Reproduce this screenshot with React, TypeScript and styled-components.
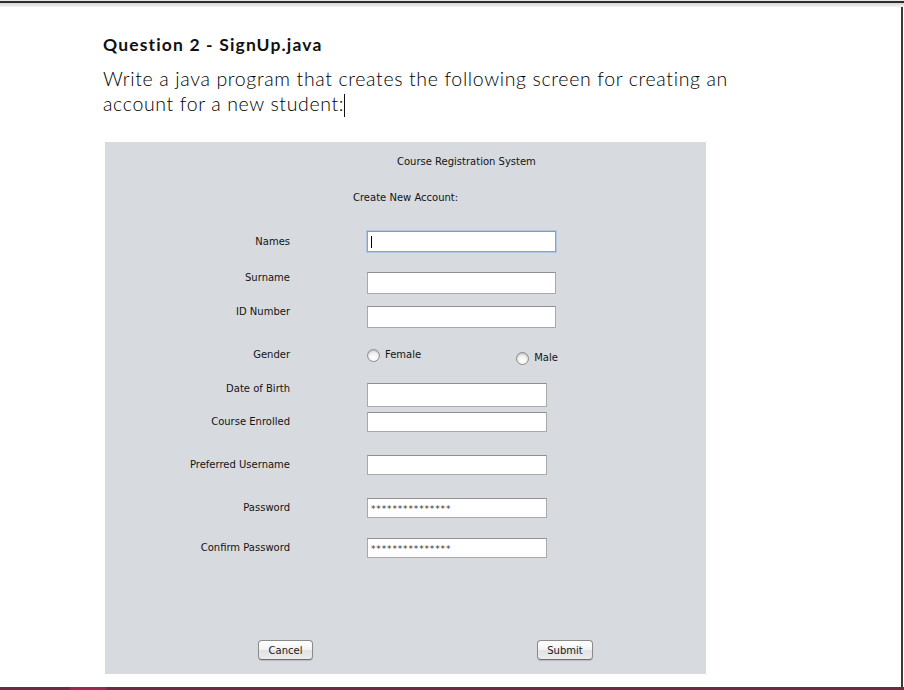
import styled, { createGlobalStyle } from 'styled-components';

const GlobalStyle = createGlobalStyle`
  html, body {
    margin: 0;
    padding: 0;
    background: #ffffff;
  }
  * {
    box-sizing: border-box;
  }
`;

const Page = styled.div`
  width: 904px;
  height: 690px;
  display: flex;
  flex-direction: column;
  background: #ffffff;
  overflow: hidden;
`;

const TopRule = styled.div`
  height: 7px;
  flex-shrink: 0;
  background: linear-gradient(
    to bottom,
    #e8e8e8 0px,
    #e8e8e8 1px,
    #2e2e2e 1px,
    #2e2e2e 3px,
    #d6d6d6 3px,
    #f4f4f4 7px
  );
`;

const Sheet = styled.div`
  flex: 1;
  border-right: 2px solid #3a3a3a;
  margin-right: 1px;
  padding: 26px 0 0 103px;
`;

const BottomBar = styled.div`
  height: 3px;
  flex-shrink: 0;
  background: #6a2b43;
  display: flex;
`;

const BarAccent = styled.div`
  width: 36px;
  margin-left: 70px;
  background: #a1264f;
`;

const Heading = styled.h2`
  margin: 0;
  font-family: 'Lato', 'Liberation Sans', sans-serif;
  font-weight: 700;
  font-size: 17.5px;
  letter-spacing: 1.15px;
  line-height: 24px;
  color: #111111;
`;

const Prompt = styled.p`
  margin: 9px 0 0 0;
  width: 690px;
  font-family: 'Lato', 'Liberation Sans', sans-serif;
  font-weight: 300;
  font-size: 19.5px;
  letter-spacing: 0.64px;
  line-height: 25px;
  color: #000000;
`;

const TextCaret = styled.span`
  display: inline-block;
  width: 0;
  height: 23px;
  border-left: 1px solid #111;
  vertical-align: -6px;
`;

const Panel = styled.div`
  width: 601px;
  height: 532px;
  margin: 25px 0 0 2px;
  background: #d7dadf;
  display: flex;
  flex-direction: column;
  font-family: 'DejaVu Sans', 'Liberation Sans', sans-serif;
  font-size: 10px;
  color: #141414;
`;

const Caption = styled.div<{ $left: number; $top: number }>`
  margin: ${(p) => p.$top}px 0 0 ${(p) => p.$left}px;
  line-height: 14px;
`;

const Row = styled.div<{ $top: number; $h?: number }>`
  display: grid;
  grid-template-columns: 185px auto;
  column-gap: 77px;
  align-items: center;
  height: ${(p) => p.$h ?? 20}px;
  margin-top: ${(p) => p.$top}px;
`;

const Label = styled.div<{ $lift?: number }>`
  text-align: right;
  line-height: 12px;
  margin-bottom: ${(p) => (p.$lift ?? 0) * 2}px;
`;

const Field = styled.div<{ $w: number; $focus?: boolean }>`
  width: ${(p) => p.$w}px;
  height: 100%;
  background: #ffffff;
  border: 1px solid ${(p) => (p.$focus ? '#86a3c8' : '#a9a9a9')};
  border-top-color: ${(p) => (p.$focus ? '#7d9cc4' : '#8f8f8f')};
  box-shadow: ${(p) => (p.$focus ? '0 0 0 1px #b3c6df' : 'none')};
  display: flex;
  align-items: center;
  padding-left: 3px;
`;

const Caret = styled.span`
  width: 1px;
  height: 12px;
  background: #000;
`;

const Masked = styled.span`
  font-family: 'DejaVu Sans', sans-serif;
  font-size: 9px;
  letter-spacing: 0.85px;
  color: #333;
  margin-top: 2px;
`;

const RadioGroup = styled.div`
  display: flex;
  align-items: center;
  height: 100%;
`;

const RadioOption = styled.label<{ $gapLeft?: number; $drop?: number }>`
  display: flex;
  align-items: center;
  gap: 5px;
  margin-left: ${(p) => p.$gapLeft ?? 0}px;
  margin-top: ${(p) => (p.$drop ?? 0) * 2}px;
  line-height: 12px;
`;

const RadioDot = styled.span`
  width: 13px;
  height: 13px;
  border-radius: 50%;
  border: 1px solid #8c8c8c;
  background: radial-gradient(circle at 50% 70%, #ffffff 0%, #f2f2f2 45%, #cfcfcf 100%);
  box-shadow: inset 0 1px 1px rgba(0, 0, 0, 0.15);
`;

const ButtonRow = styled.div`
  display: flex;
  margin: 82px 0 0 153px;
`;

const Button = styled.button<{ $w: number; $gap?: number }>`
  width: ${(p) => p.$w}px;
  height: 20px;
  margin-left: ${(p) => p.$gap ?? 0}px;
  padding: 0;
  border: 1px solid #8a8a8a;
  border-bottom-color: #6f6f6f;
  border-radius: 4px;
  background: linear-gradient(to bottom, #ffffff 0%, #f3f3f3 50%, #e2e2e2 51%, #ececec 100%);
  box-shadow: 0 1px 1px rgba(0, 0, 0, 0.15);
  font-family: 'DejaVu Sans', 'Liberation Sans', sans-serif;
  font-size: 10px;
  color: #1a1a1a;
`;

export default function App() {
  return (
    <Page>
      <GlobalStyle />
      <TopRule />
      <Sheet>
        <Heading>Question 2 - SignUp.java</Heading>
        <Prompt>
          Write a java program that creates the following screen for creating an account for a new
          student:<TextCaret />
        </Prompt>
        <Panel>
          <Caption $left={292} $top={13}>Course Registration System</Caption>
          <Caption $left={248} $top={22}>Create New Account:</Caption>

          <Row $top={26} $h={21}>
            <Label>Names</Label>
            <Field $w={189} $focus>
              <Caret />
            </Field>
          </Row>
          <Row $top={20}>
            <Label $lift={5}>Surname</Label>
            <Field $w={189} />
          </Row>
          <Row $top={14} $h={21}>
            <Label $lift={5}>ID Number</Label>
            <Field $w={189} />
          </Row>
          <Row $top={18}>
            <Label>Gender</Label>
            <RadioGroup>
              <RadioOption>
                <RadioDot />
                Female
              </RadioOption>
              <RadioOption $gapLeft={95} $drop={3}>
                <RadioDot />
                Male
              </RadioOption>
            </RadioGroup>
          </Row>
          <Row $top={18}>
            <Label $lift={6}>Date of Birth</Label>
            <Field $w={180} />
          </Row>
          <Row $top={9}>
            <Label>Course Enrolled</Label>
            <Field $w={180} />
          </Row>
          <Row $top={23}>
            <Label>Preferred Username</Label>
            <Field $w={180} />
          </Row>
          <Row $top={23}>
            <Label>Password</Label>
            <Field $w={180}>
              <Masked>***************</Masked>
            </Field>
          </Row>
          <Row $top={20}>
            <Label>Confirm Password</Label>
            <Field $w={180}>
              <Masked>***************</Masked>
            </Field>
          </Row>

          <ButtonRow>
            <Button $w={55}>Cancel</Button>
            <Button $w={56} $gap={224}>Submit</Button>
          </ButtonRow>
        </Panel>
      </Sheet>
      <BottomBar>
        <BarAccent />
      </BottomBar>
    </Page>
  );
}
